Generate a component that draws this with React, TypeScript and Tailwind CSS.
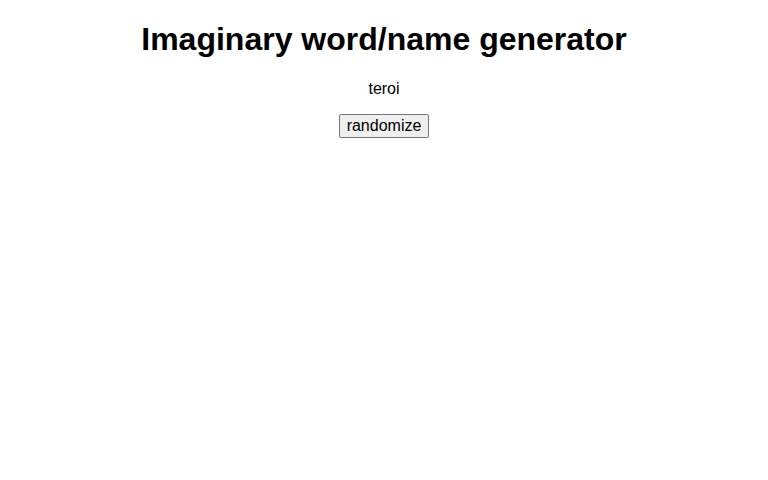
import { useState } from "react";

const syllables = ["te", "ro", "i", "ka", "mi", "lo", "sa", "na", "vu", "ra"];

function makeWord(): string {
  const n = 2 + Math.floor(Math.random() * 2);
  let w = "";
  for (let i = 0; i < n; i++) w += syllables[Math.floor(Math.random() * syllables.length)];
  return w;
}

export default function App() {
  const [word, setWord] = useState("teroi");
  return (
    <div className="bg-white text-black text-center font-['Liberation_Sans',Arial,sans-serif] text-[16px] leading-[normal]">
      <h1 className="text-[32px] font-bold pt-[21px] leading-[37px]">Imaginary word/name generator</h1>
      <p className="mt-[22px] leading-[18px]">{word}</p>
      <button
        onClick={() => setWord(makeWord())}
        className="mt-[16px] px-[7px] py-[1px] leading-[20px] bg-[#efefef] border border-[#767676] rounded-[2px] text-[16px] text-black"
      >
        randomize
      </button>
    </div>
  );
}
